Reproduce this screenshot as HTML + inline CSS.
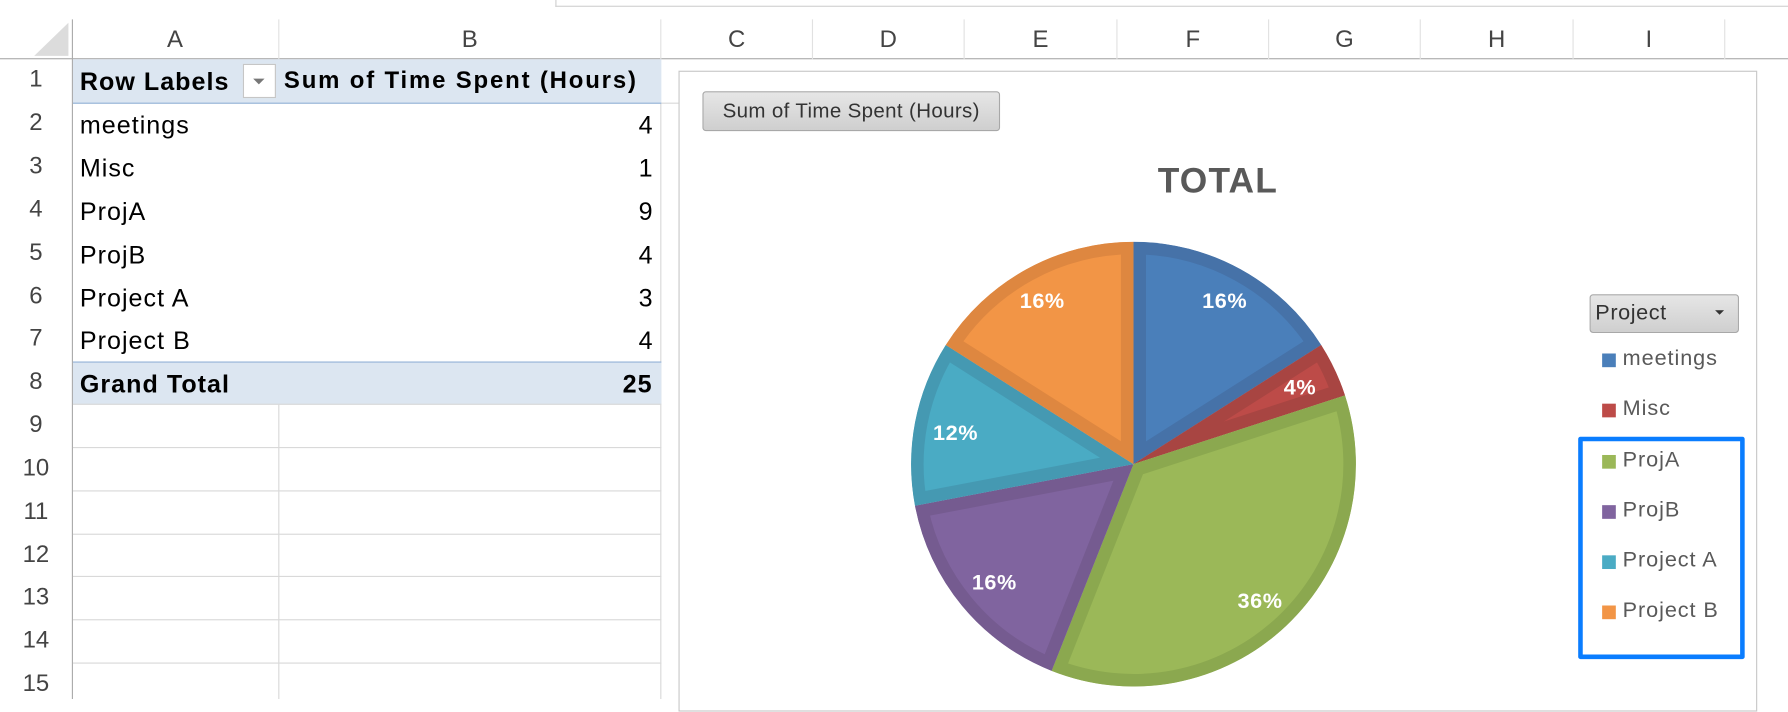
<!DOCTYPE html>
<html><head><meta charset="utf-8"><style>
html,body{margin:0;padding:0;background:#fff;overflow:hidden;width:1788px;height:699px}
#s{position:absolute;left:0;top:0;width:1568px;height:613px;transform:scale(1.14031);transform-origin:0 0;font-family:"Liberation Sans",Arial,sans-serif}
.a{position:absolute}
.ch{position:absolute;top:17px;height:35px;line-height:35px;text-align:center;font-size:21px;color:#444;border-right:1px solid #e1e1e1}
.rh{position:absolute;left:0;width:63px;text-align:center;font-size:21px;color:#444}
.c{position:absolute;font-size:22px;letter-spacing:0.9px;color:#000;white-space:nowrap}
.hl{position:absolute;height:1px;background:#d9d9d9}
.vl{position:absolute;width:1px;background:#d9d9d9}
.lg{position:absolute;left:1423px;font-size:19px;letter-spacing:0.8px;color:#595959}
.sq{position:absolute;left:1405px;width:12px;height:12px}
</style></head><body><div id="s">
<div class="a" style="left:487px;top:0;width:1081px;height:5px;border:1px solid #d0d0d0;border-top:none;border-right:none"></div>
<svg class="a" style="left:0;top:17px" width="63" height="35"><polygon points="60,3 60,32 30,32" fill="#dcdcdc"/></svg>
<div class="a" style="left:0;top:51px;width:1568px;height:1px;background:#ababab"></div>
<div class="a" style="left:63px;top:17px;width:1px;height:596px;background:#ababab"></div>
<div class="ch" style="left:63px;width:181px">A</div>
<div class="ch" style="left:245px;width:334px">B</div>
<div class="ch" style="left:580px;width:132px">C</div>
<div class="ch" style="left:713px;width:132px">D</div>
<div class="ch" style="left:846px;width:133px">E</div>
<div class="ch" style="left:980px;width:132px">F</div>
<div class="ch" style="left:1113px;width:132px">G</div>
<div class="ch" style="left:1246px;width:133px">H</div>
<div class="ch" style="left:1380px;width:132px">I</div>
<!-- grid -->
<div class="vl" style="left:244px;top:354px;height:259px"></div>
<div class="vl" style="left:579px;top:90px;height:523px"></div>
<div class="a" style="left:64px;top:52px;width:516px;height:38px;background:#dce6f1;border-bottom:1px solid #95b3d7"></div>
<div class="a" style="left:64px;top:317px;width:516px;height:37px;background:#dce6f1;border-top:1px solid #95b3d7"></div>
<div class="a" style="left:213px;top:56px;width:29px;height:30px;background:#fff;border:1px solid #c6c6c6;box-sizing:border-box"><svg width="27" height="28"><polygon points="8,12 18,12 13,17" fill="#777"/></svg></div>
<div class="hl" style="left:64px;top:354px;width:516px"></div><div class="hl" style="left:64px;top:392px;width:516px"></div><div class="hl" style="left:64px;top:430px;width:516px"></div><div class="hl" style="left:64px;top:468px;width:516px"></div><div class="hl" style="left:64px;top:505px;width:516px"></div><div class="hl" style="left:64px;top:543px;width:516px"></div><div class="hl" style="left:64px;top:581px;width:516px"></div>
<div class="hl" style="left:580px;top:90px;width:15px"></div>
<!-- row numbers -->
<div class="rh" style="top:58px">1</div><div class="rh" style="top:96px">2</div><div class="rh" style="top:134px">3</div><div class="rh" style="top:172px">4</div><div class="rh" style="top:210px">5</div><div class="rh" style="top:248px">6</div><div class="rh" style="top:285px">7</div><div class="rh" style="top:323px">8</div><div class="rh" style="top:361px">9</div><div class="rh" style="top:399px">10</div><div class="rh" style="top:437px">11</div><div class="rh" style="top:475px">12</div><div class="rh" style="top:512px">13</div><div class="rh" style="top:550px">14</div><div class="rh" style="top:588px">15</div>
<!-- cells -->
<div class="c" style="left:70px;top:59px;font-weight:bold">Row Labels</div>
<div class="c" style="left:249px;top:59px;font-weight:bold;font-size:21px;letter-spacing:1.6px">Sum of Time Spent (Hours)</div>
<div class="c" style="left:70px;top:97px">meetings</div><div class="c" style="left:560px;top:97px">4</div>
<div class="c" style="left:70px;top:135px">Misc</div><div class="c" style="left:560px;top:135px">1</div>
<div class="c" style="left:70px;top:173px">ProjA</div><div class="c" style="left:560px;top:173px">9</div>
<div class="c" style="left:70px;top:211px">ProjB</div><div class="c" style="left:560px;top:211px">4</div>
<div class="c" style="left:70px;top:249px">Project A</div><div class="c" style="left:560px;top:249px">3</div>
<div class="c" style="left:70px;top:286px">Project B</div><div class="c" style="left:560px;top:286px">4</div>
<div class="c" style="left:70px;top:324px;font-weight:bold">Grand Total</div><div class="c" style="left:546px;top:324px;font-weight:bold">25</div>
<!-- chart -->
<div class="a" style="left:595px;top:62px;width:944px;height:560px;background:#fff;border:1px solid #c8c8c8"></div>
<div class="a" style="left:616px;top:80px;width:261px;height:35px;box-sizing:border-box;border:1px solid #a8a8a8;border-radius:3px;background:linear-gradient(#e6e6e6,#cfcfcf);font-size:18px;letter-spacing:0.3px;color:#333;line-height:33px;text-align:center">Sum of Time Spent (Hours)</div>
<div class="a" style="left:958px;top:141px;width:220px;text-align:center;font-size:31px;font-weight:bold;letter-spacing:1px;color:#595959">TOTAL</div>
<svg class="a" style="left:0;top:0" width="1568" height="613">
<defs>
<clipPath id="p1"><path d="M994,407 L994,212 A195,195 0 0 1 1158.6,302.5 Z"/></clipPath>
<clipPath id="p2"><path d="M994,407 L1158.6,302.5 A195,195 0 0 1 1179.5,346.7 Z"/></clipPath>
<clipPath id="p3"><path d="M994,407 L1179.5,346.7 A195,195 0 0 1 922.2,588.3 Z"/></clipPath>
<clipPath id="p4"><path d="M994,407 L922.2,588.3 A195,195 0 0 1 802.4,443.5 Z"/></clipPath>
<clipPath id="p5"><path d="M994,407 L802.4,443.5 A195,195 0 0 1 829.4,302.5 Z"/></clipPath>
<clipPath id="p6"><path d="M994,407 L829.4,302.5 A195,195 0 0 1 994,212 Z"/></clipPath>
</defs>
<g stroke-width="22" stroke-linejoin="miter">
<path clip-path="url(#p1)" d="M994,407 L994,212 A195,195 0 0 1 1158.6,302.5 Z" fill="#4a7fba" stroke="#4672a8"/>
<path clip-path="url(#p2)" d="M994,407 L1158.6,302.5 A195,195 0 0 1 1179.5,346.7 Z" fill="#bd4b48" stroke="#a84542"/>
<path clip-path="url(#p3)" d="M994,407 L1179.5,346.7 A195,195 0 0 1 922.2,588.3 Z" fill="#9bb858" stroke="#8ba84f"/>
<path clip-path="url(#p4)" d="M994,407 L922.2,588.3 A195,195 0 0 1 802.4,443.5 Z" fill="#80649f" stroke="#755b90"/>
<path clip-path="url(#p5)" d="M994,407 L802.4,443.5 A195,195 0 0 1 829.4,302.5 Z" fill="#4aabc4" stroke="#4599b2"/>
<path clip-path="url(#p6)" d="M994,407 L829.4,302.5 A195,195 0 0 1 994,212 Z" fill="#f29546" stroke="#de8740"/>
</g>
<g fill="#fff" font-family="Liberation Sans, Arial, sans-serif" font-weight="bold" font-size="19" letter-spacing="0.5" text-anchor="middle">
<text x="1074" y="270">16%</text><text x="1140" y="346">4%</text><text x="1105" y="533">36%</text><text x="872" y="517">16%</text><text x="838" y="386">12%</text><text x="914" y="270">16%</text>
</g>
</svg>
<div class="a" style="left:1394px;top:258px;width:131px;height:34px;box-sizing:border-box;border:1px solid #a8a8a8;border-radius:3px;background:linear-gradient(#e6e6e6,#cfcfcf);font-size:19px;letter-spacing:0.5px;color:#333;line-height:32px;padding-left:4px">Project<svg style="position:absolute;right:12px;top:13px" width="8" height="5"><polygon points="0,0 8,0 4,4" fill="#333"/></svg></div>
<div class="sq" style="top:310px;background:#4a7fba"></div><div class="lg" style="top:304px">meetings</div>
<div class="sq" style="top:354px;background:#bd4b48"></div><div class="lg" style="top:348px">Misc</div>
<div class="sq" style="top:399px;background:#9bb858"></div><div class="lg" style="top:393px">ProjA</div>
<div class="sq" style="top:443px;background:#80649f"></div><div class="lg" style="top:437px">ProjB</div>
<div class="sq" style="top:487px;background:#4aabc4"></div><div class="lg" style="top:481px">Project A</div>
<div class="sq" style="top:531px;background:#f29546"></div><div class="lg" style="top:525px">Project B</div>
<div class="a" style="left:1384px;top:383px;width:146px;height:195px;box-sizing:border-box;border:4px solid #0a7dff;border-radius:2px"></div>
</div></body></html>
